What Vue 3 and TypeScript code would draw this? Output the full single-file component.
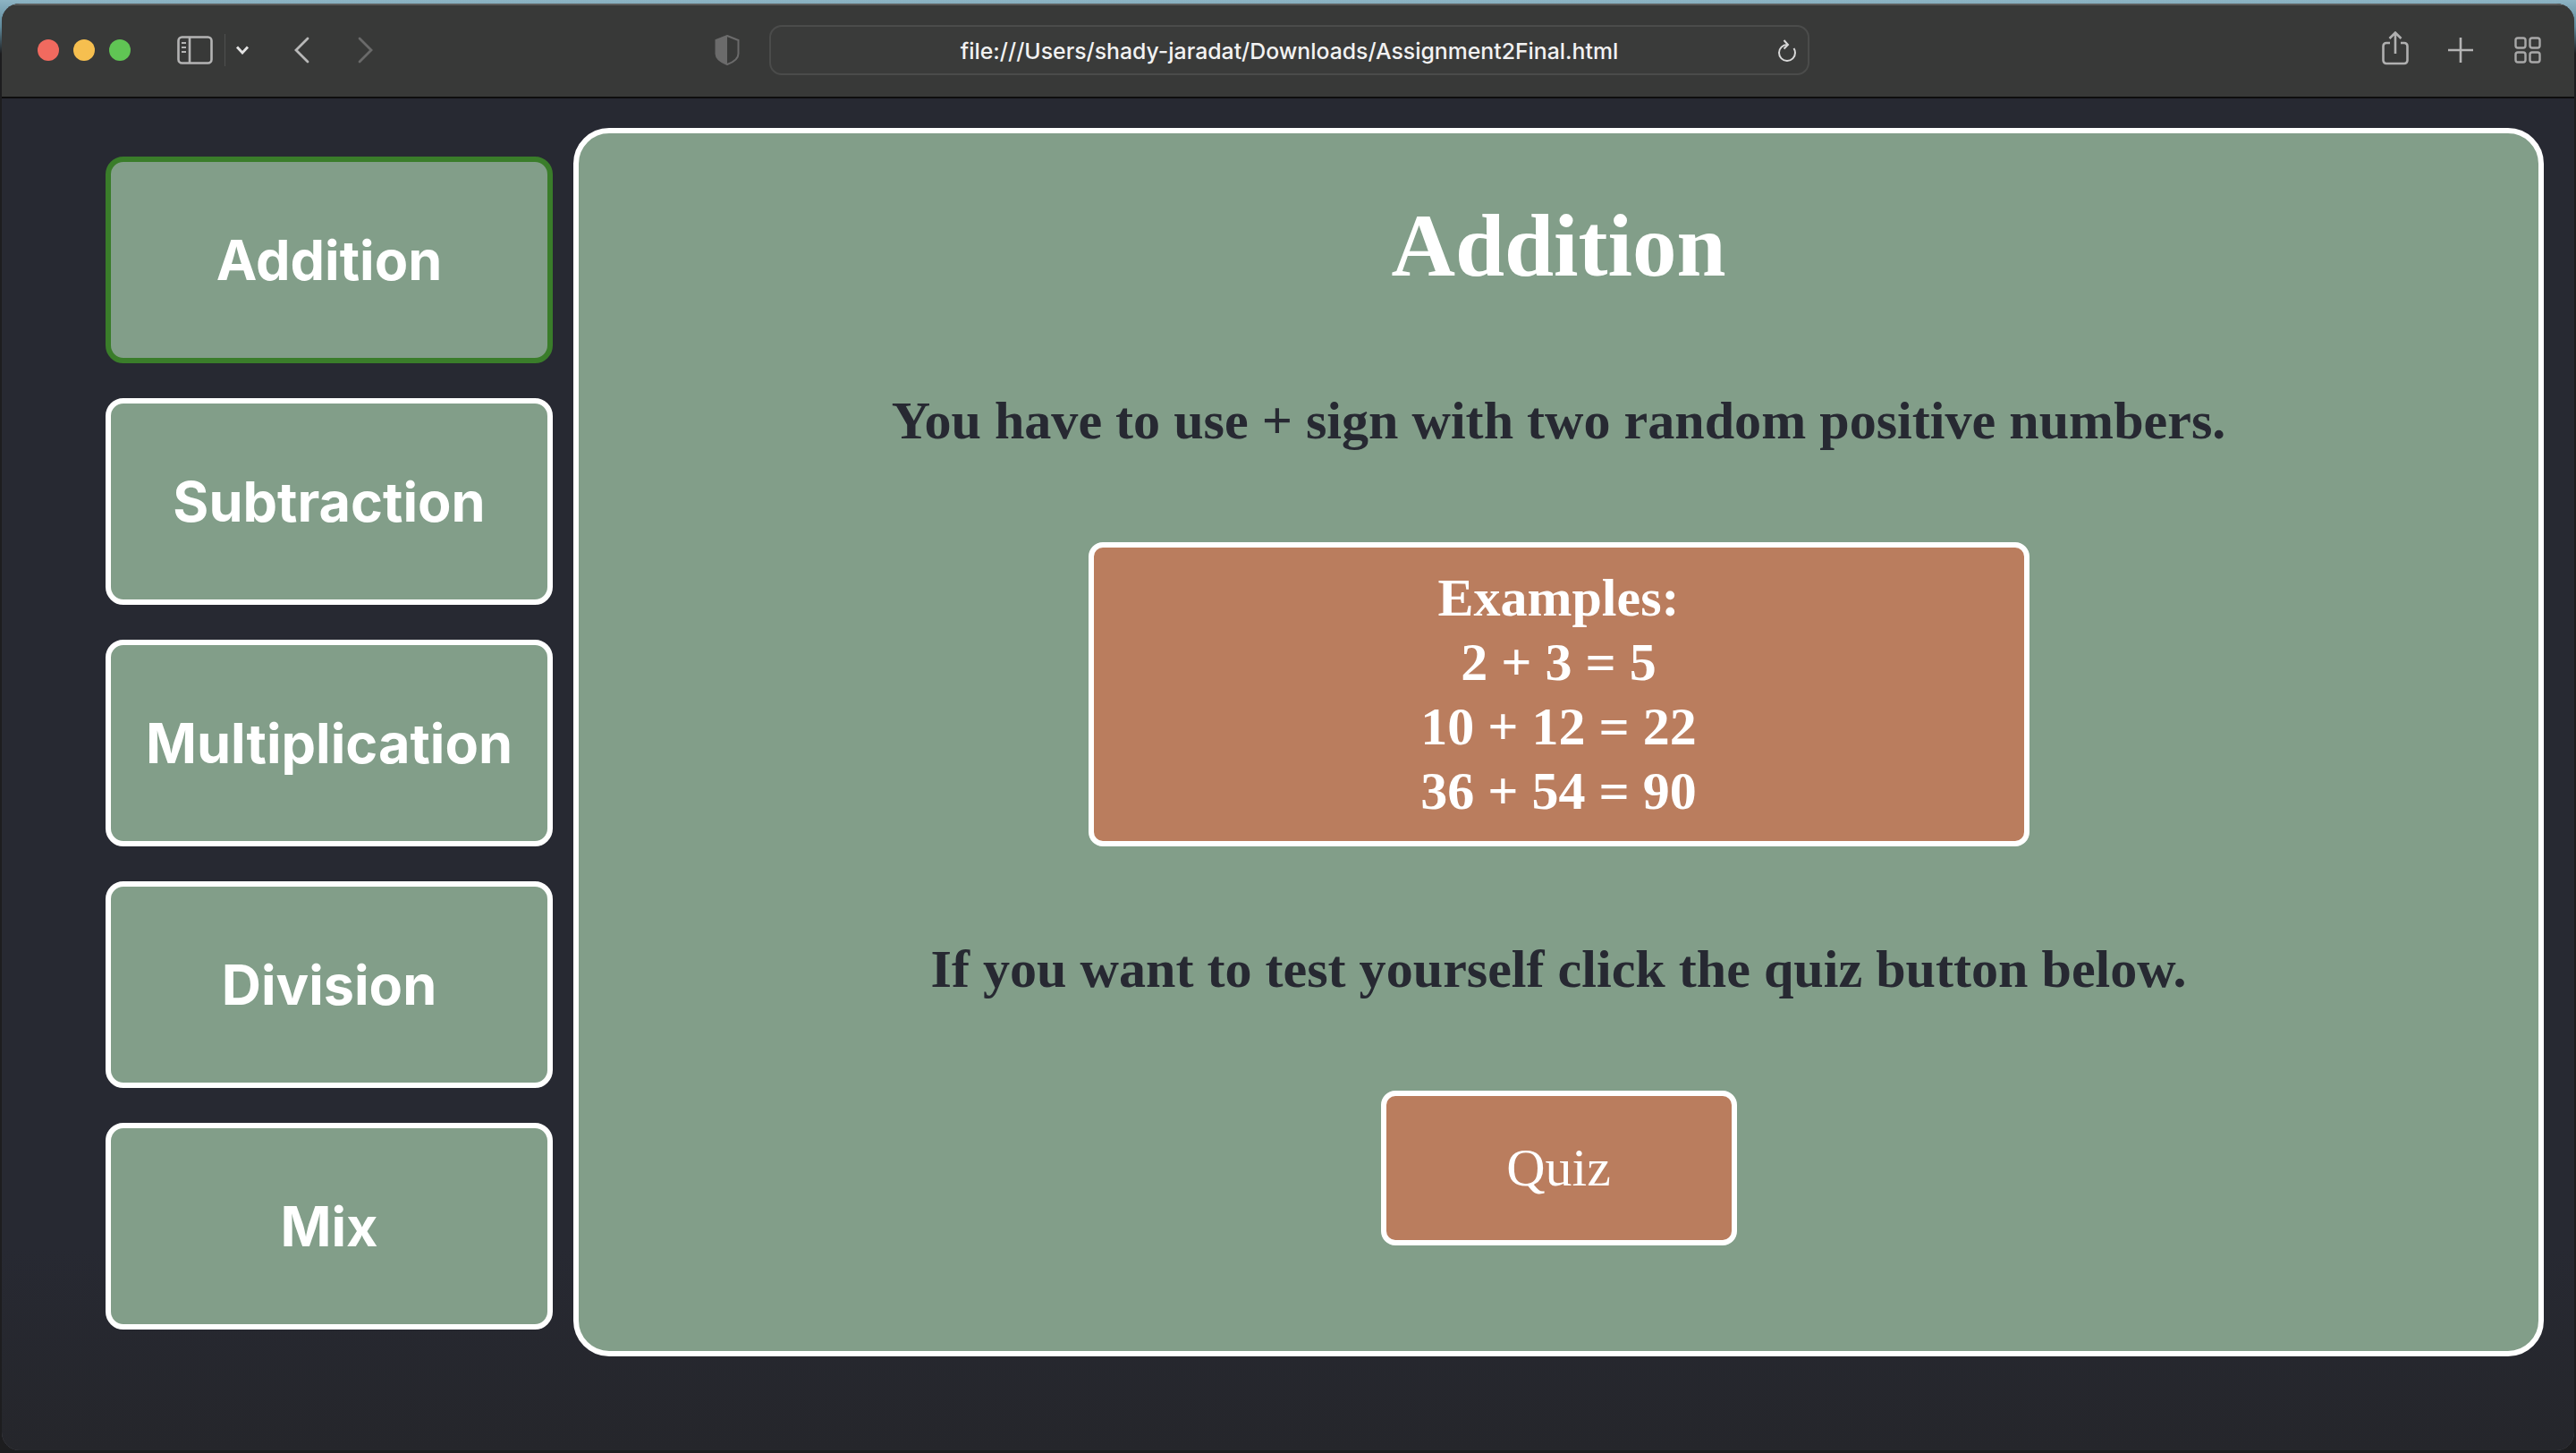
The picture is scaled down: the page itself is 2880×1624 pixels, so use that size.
<script setup lang="ts">
const items: string[] = ['Addition', 'Subtraction', 'Multiplication', 'Division', 'Mix']
const examples: string[] = ['Examples:', '2 + 3 = 5', '10 + 12 = 22', '36 + 54 = 90']
</script>

<template>
  <div class="screen">
    <div class="window">
      <header class="toolbar">
        <div class="lights">
          <span class="light red"></span>
          <span class="light yellow"></span>
          <span class="light green"></span>
        </div>
        <svg class="ic-sidebar" width="40" height="32" viewBox="0 0 40 32" fill="none" stroke="#b4b4b4" stroke-width="2.6">
          <rect x="1.5" y="1.5" width="37" height="29" rx="4" />
          <path d="M14 2v28" />
          <path d="M5 8h5M5 13h5M5 18h5" stroke-width="2.2" />
        </svg>
        <span class="sep"></span>
        <svg class="ic-down" width="16" height="10" viewBox="0 0 16 10" fill="none" stroke="#e4e4e4" stroke-width="2.8">
          <path d="M2 1.5 8 8l6-6.5" />
        </svg>
        <svg class="ic-back" width="18" height="30" viewBox="0 0 18 30" fill="none" stroke="#b8b8b8" stroke-width="2.8" stroke-linecap="round">
          <path d="M16 2 3 15l13 13" />
        </svg>
        <svg class="ic-forward" width="18" height="30" viewBox="0 0 18 30" fill="none" stroke="#6a6a6a" stroke-width="2.8" stroke-linecap="round">
          <path d="M2 2l13 13L2 28" />
        </svg>
        <svg class="ic-shield" width="28" height="34" viewBox="0 0 28 34">
          <path d="M14 1 26.5 6v15c0 5-5.5 9.500-12.500 12C7.500 30.500 1.500 26 1.500 21V6Z" fill="none" stroke="#6b6b6b" stroke-width="2" />
          <path d="M14 1 1.500 6v15c0 5 6 9.500 12.500 12Z" fill="#6b6b6b" />
        </svg>
        <div class="url">
          <span class="url-text">file:///Users/shady-jaradat/Downloads/Assignment2Final.html</span>
          <svg class="ic-reload" width="22" height="26" viewBox="0 0 22 26" fill="none" stroke="#d8d8d8" stroke-width="2">
            <path d="M11 6a9 9 0 1 0 9 9c0-2-.6-3.600-1.500-5" />
            <path d="M7.500 1 12 6 7.500 10.500" />
          </svg>
        </div>
        <svg class="ic-share" width="30" height="38" viewBox="0 0 30 38" fill="none" stroke="#b0b0b0" stroke-width="2.6">
          <path d="M9 13H5a3.500 3.500 0 0 0-3.500 3.500v16A3.500 3.500 0 0 0 5 36h20a3.500 3.500 0 0 0 3.500-3.500v-16A3.500 3.500 0 0 0 25 13h-4" />
          <path d="M15 25V2M8.500 8 15 1.500 21.500 8" />
        </svg>
        <svg class="ic-plus" width="30" height="28" viewBox="0 0 30 28" fill="none" stroke="#b4b4b4" stroke-width="2.6">
          <path d="M15 0v28M1 14h28" />
        </svg>
        <svg class="ic-grid" width="30" height="30" viewBox="0 0 30 30" fill="none" stroke="#a8a8a8" stroke-width="2.400">
          <rect x="1.500" y="1.500" width="11" height="11" rx="2.500" />
          <rect x="17.500" y="1.500" width="11" height="11" rx="2.500" />
          <rect x="1.500" y="17.500" width="11" height="11" rx="2.500" />
          <rect x="17.500" y="17.500" width="11" height="11" rx="2.500" />
        </svg>
      </header>
      <div class="page">
        <nav class="side">
          <div v-for="(item, i) in items" :key="item" class="tab" :class="{ active: i === 0 }">{{ item }}</div>
        </nav>
        <main class="panel">
          <h1 class="title">Addition</h1>
          <p class="lead lead-first">You have to use + sign with two random positive numbers.</p>
          <div class="examples">
            <div v-for="line in examples" :key="line">{{ line }}</div>
          </div>
          <p class="lead lead-second">If you want to test yourself click the quiz button below.</p>
          <button class="quiz" type="button">Quiz</button>
        </main>
      </div>
    </div>
  </div>
</template>

<style>
html, body { margin: 0; padding: 0; background: #1b1b1d; }
</style>

<style scoped>
.screen {
  width: 2880px;
  height: 1624px;
  box-sizing: border-box;
  padding: 4px 2px 3px 2px;
  background: linear-gradient(180deg, #8db4c4 0, #5f8a9c 30px, #1d1d1f 60px);
  overflow: hidden;
}
.window {
  height: 100%;
  display: flex;
  flex-direction: column;
  border-radius: 20px;
  overflow: hidden;
  background: #272932;
  box-shadow: inset 0 0 0 1px #55555b;
}
.toolbar {
  height: 106px;
  flex: none;
  box-sizing: border-box;
  display: flex;
  align-items: center;
  padding: 0 0 2px 40px;
  background: #383938;
  border-top: 2px solid #5c5d5c;
  border-bottom: 2px solid #0e0e0e;
}
.lights { display: flex; gap: 16px; }
.light { width: 24px; height: 24px; border-radius: 50%; display: block; }
.red { background: #f16a5f; }
.yellow { background: #f6bf4f; }
.green { background: #60c554; }
.ic-sidebar { margin-left: 52px; flex: none; }
.sep { width: 1px; height: 36px; background: #4f504f; margin-left: 13px; flex: none; }
.ic-down { margin-left: 11px; flex: none; }
.ic-back { margin-left: 49px; flex: none; }
.ic-forward { margin-left: 54px; flex: none; }
.ic-shield { margin-left: 381px; flex: none; }
.url {
  margin-left: 33px;
  width: 1163px;
  height: 56px;
  flex: none;
  box-sizing: border-box;
  display: flex;
  align-items: center;
  position: relative;
  border: 2px solid #4b4c4b;
  border-radius: 14px;
  background: #3a3b3a;
  color: #f2f2f2;
}
.url-text {
  font-family: Inter, "Liberation Sans", sans-serif;
  font-size: 24.800px;
  font-weight: 500;
  width: 100%;
  padding-top: 2px;
  text-align: center;
  white-space: nowrap;
}
.ic-reload { position: absolute; right: 12px; top: 14px; }
.ic-share { margin-left: 640px; flex: none; margin-top: -4px; }
.ic-plus { margin-left: 43px; flex: none; }
.ic-grid { margin-left: 45px; flex: none; }

.page {
  flex: 1;
  display: flex;
  align-items: flex-start;
  min-height: 0;
  padding: 33px 31px 0 116px;
  background: linear-gradient(180deg, #272932 85%, #25262b 100%);
}
.side {
  width: 500px;
  flex: none;
  display: flex;
  flex-direction: column;
  gap: 39px;
  padding-top: 32px;
}
.tab {
  height: 231px;
  box-sizing: border-box;
  display: flex;
  align-items: center;
  justify-content: center;
  padding-top: 1px;
  border: 6px solid #ffffff;
  border-radius: 20px;
  background: #829e89;
  color: #fff;
  font-family: Inter, "Liberation Sans", sans-serif;
  font-weight: 700;
  font-size: 61.200px;
  white-space: nowrap;
}
.tab.active { border-color: #3a7d2a; }
.panel {
  margin-left: 23px;
  width: 2203px;
  height: 1373px;
  flex: none;
  box-sizing: border-box;
  display: flex;
  flex-direction: column;
  align-items: center;
  border: 6px solid #ffffff;
  border-radius: 40px;
  background: #829e89;
  font-family: "Liberation Serif", "Times New Roman", serif;
}
.title {
  margin: 70px 0 0;
  font-size: 99px;
  line-height: 112px;
  font-weight: 700;
  color: #ffffff;
}
.lead {
  margin: 0;
  font-size: 60.100px;
  line-height: 68px;
  font-weight: 700;
  color: #272932;
  white-space: nowrap;
}
.lead-first { margin-top: 105px; }
.lead-second { margin-top: 103px; }
.examples {
  margin-top: 102px;
  width: 1052px;
  height: 340px;
  box-sizing: border-box;
  display: flex;
  flex-direction: column;
  justify-content: center;
  border: 6px solid #ffffff;
  border-radius: 16px;
  background: #ba7d5e;
  color: #ffffff;
  font-size: 60px;
  line-height: 72px;
  font-weight: 700;
  text-align: center;
}
.quiz {
  margin-top: 102px;
  width: 398px;
  height: 173px;
  box-sizing: border-box;
  border: 6px solid #ffffff;
  border-radius: 16px;
  background: #ba7d5e;
  color: #ffffff;
  font-family: "Liberation Serif", "Times New Roman", serif;
  font-size: 60px;
  padding: 0;
}
</style>
